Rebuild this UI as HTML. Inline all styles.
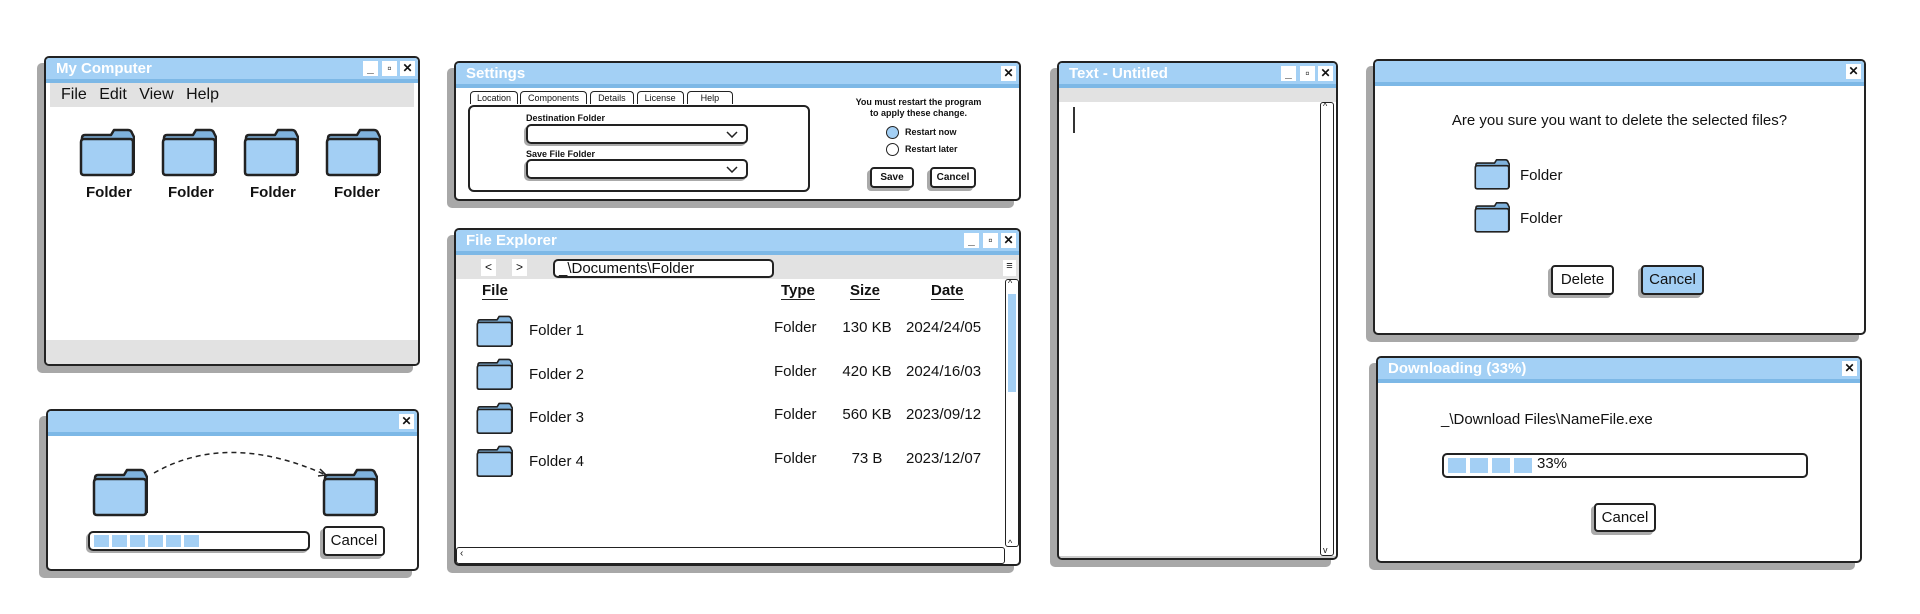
<!DOCTYPE html>
<html><head><meta charset="utf-8"><style>
*{box-sizing:border-box;margin:0;padding:0}
body{width:1920px;height:614px;background:#fff;position:relative;overflow:hidden;font-family:"Liberation Sans",sans-serif;color:#111}
.a{position:absolute}
.win{position:absolute;background:#fff;border:2px solid #222;border-radius:5px;box-shadow:-7px 7px 0 #a8a8a8;overflow:hidden}
.tb{position:absolute;left:0;right:0;top:0;height:25px;background:#a3d0f5;border-bottom:4px solid #7db8e6}
.tt{position:absolute;left:10px;top:2px;color:#fff;font-weight:bold;font-size:15px}
.wb{position:absolute;top:3px;width:15px;height:15px;background:#fff;font-size:12px;line-height:15px;text-align:center;font-weight:bold;color:#111}
.gray{position:absolute;left:0;right:0;background:#e2e2e2}
.btn{position:absolute;border:2px solid #222;border-radius:4px;background:#fff;box-shadow:-3px 3px 0 #aaa;font-size:15px;text-align:center}
.lbl{position:absolute;font-size:15px;font-weight:bold;white-space:nowrap}
.fx{position:absolute}
.chev{position:absolute;right:8px;top:5px}
</style></head><body>
<svg width="0" height="0" style="position:absolute"><defs>
<symbol id="f" viewBox="0 0 56 48"><path d="M3 44V10q0-3 3-3h26l3-5h14q3 0 4 3l2 4v35z" fill="#7fb2dd" stroke="#222" stroke-width="2.5" stroke-linejoin="round"/><path d="M2 14q0-3 3-3h46q3 0 3 3v30q0 3-3 3H5q-3 0-3-3z" fill="#a3cff4" stroke="#222" stroke-width="2.5"/></symbol>
</defs></svg>

<!-- My Computer -->
<div class="win" style="left:44px;top:56px;width:376px;height:310px">
<div class="tb"><span class="tt">My Computer</span>
<span class="wb" style="right:40px">_</span><span class="wb" style="right:21px">▫</span><span class="wb" style="right:3px">✕</span></div>
<div class="gray" style="top:25px;height:24px;left:4px;right:4px"></div>
<div class="a" style="left:15px;top:28px;font-size:16px;word-spacing:8px">File Edit View Help</div>
<div class="gray" style="top:282px;bottom:0"></div>
<svg class="fx" style="left:33px;top:69px" width="56" height="50"><use href="#f"/></svg>
<svg class="fx" style="left:115px;top:69px" width="56" height="50"><use href="#f"/></svg>
<svg class="fx" style="left:197px;top:69px" width="56" height="50"><use href="#f"/></svg>
<svg class="fx" style="left:279px;top:69px" width="56" height="50"><use href="#f"/></svg>
<div class="lbl" style="left:40px;top:126px">Folder</div><div class="lbl" style="left:122px;top:126px">Folder</div>
<div class="lbl" style="left:204px;top:126px">Folder</div><div class="lbl" style="left:288px;top:126px">Folder</div>
</div>

<!-- Copy dialog -->
<div class="win" style="left:46px;top:409px;width:373px;height:162px">
<div class="tb"><span class="wb" style="right:3px">✕</span></div>
<svg class="fx" style="left:44px;top:56px" width="56" height="50"><use href="#f"/></svg>
<svg class="fx" style="left:274px;top:56px" width="56" height="50"><use href="#f"/></svg>
<svg class="fx" style="left:0;top:0" width="373" height="160"><path d="M106 62 Q180 20 278 64" fill="none" stroke="#222" stroke-width="1.5" stroke-dasharray="5 4"/><path d="M272 58l6 6-8 1" fill="none" stroke="#222" stroke-width="1.5"/></svg>
<div class="a" style="left:40px;top:120px;width:222px;height:20px;border:2px solid #222;border-radius:5px;box-shadow:-2px 2px 0 #aaa"></div>
<div class="a" style="left:46px;top:124px;width:105px;height:12px;background:repeating-linear-gradient(90deg,#a3cff4 0 15px,transparent 15px 18px)"></div>
<div class="btn" style="left:275px;top:115px;width:62px;height:30px;line-height:26px">Cancel</div>
</div>

<!-- Settings -->
<div class="win" style="left:454px;top:61px;width:567px;height:140px;font-size:10px;font-weight:bold">
<div class="tb"><span class="tt">Settings</span><span class="wb" style="right:3px">✕</span></div>
<div class="a" style="left:12px;top:42px;width:342px;height:87px;border:2px solid #222;border-radius:6px"></div>
<div class="a" style="left:14px;top:28px;font-size:9px;font-weight:normal">
<span style="display:inline-block;border:1.5px solid #222;border-bottom:none;border-radius:4px 4px 0 0;padding:1px 6px;background:#fff">Location</span><span style="display:inline-block;border:1.5px solid #222;border-bottom:none;border-radius:4px 4px 0 0;padding:1px 7px;margin-left:2px">Components</span><span style="display:inline-block;border:1.5px solid #222;border-bottom:none;border-radius:4px 4px 0 0;padding:1px 7px;margin-left:3px">Details</span><span style="display:inline-block;border:1.5px solid #222;border-bottom:none;border-radius:4px 4px 0 0;padding:1px 7px;margin-left:3px">License</span><span style="display:inline-block;border:1.5px solid #222;border-bottom:none;border-radius:4px 4px 0 0;padding:1px 13px;margin-left:3px">Help</span></div>
<div class="a" style="left:70px;top:50px;font-size:9px">Destination Folder</div>
<div class="a" style="left:70px;top:61px;width:222px;height:20px;border:2px solid #222;border-radius:5px;box-shadow:-2px 2px 0 #aaa"><svg class="chev" width="12" height="7"><path d="M1 1l5 5 5-5" fill="none" stroke="#222" stroke-width="1.5"/></svg></div>
<div class="a" style="left:70px;top:86px;font-size:9px">Save File Folder</div>
<div class="a" style="left:70px;top:96px;width:222px;height:20px;border:2px solid #222;border-radius:5px;box-shadow:-2px 2px 0 #aaa"><svg class="chev" width="12" height="7"><path d="M1 1l5 5 5-5" fill="none" stroke="#222" stroke-width="1.5"/></svg></div>
<div class="a" style="left:385px;top:34px;width:155px;text-align:center;font-size:9px;line-height:11px;white-space:nowrap">You must restart the program<br>to apply these change.</div>
<div class="a" style="left:430px;top:63px;width:13px;height:13px;border:1.5px solid #222;border-radius:50%;background:#a3cff4"></div>
<div class="a" style="left:449px;top:64px;font-size:9px">Restart now</div>
<div class="a" style="left:430px;top:80px;width:13px;height:13px;border:1.5px solid #222;border-radius:50%"></div>
<div class="a" style="left:449px;top:81px;font-size:9px">Restart later</div>
<div class="btn" style="left:414px;top:104px;width:44px;height:21px;font-size:10px;line-height:17px">Save</div>
<div class="btn" style="left:474px;top:104px;width:46px;height:21px;font-size:10px;line-height:17px">Cancel</div>
</div>

<!-- File Explorer -->
<div class="win" style="left:454px;top:228px;width:567px;height:338px">
<div class="tb"><span class="tt">File Explorer</span>
<span class="wb" style="right:40px">_</span><span class="wb" style="right:21px">▫</span><span class="wb" style="right:3px">✕</span></div>
<div class="gray" style="top:25px;height:24px"></div>
<div class="a" style="left:25px;top:29px;width:15px;height:17px;background:#fff;font-size:12px;line-height:17px;text-align:center">&lt;</div>
<div class="a" style="left:56px;top:29px;width:15px;height:17px;background:#fff;font-size:12px;line-height:17px;text-align:center">&gt;</div>
<div class="a" style="left:97px;top:29px;width:221px;height:19px;border:2px solid #222;border-radius:5px;background:#fff;font-size:15px;line-height:15px;padding-left:4px">_\Documents\Folder</div>
<div class="a" style="right:3px;top:30px;width:13px;height:16px;background:#fff;font-size:11px;text-align:center">≡</div>
<div class="a" style="right:0;top:49px;width:14px;bottom:17px;border:1.5px solid #222;border-radius:3px;background:#fff"><div class="a" style="left:2px;right:2px;top:14px;height:98px;background:#a3cff4"></div><span class="a" style="left:2px;top:-2px;font-size:9px">^</span><span class="a" style="left:2px;bottom:-2px;font-size:9px">^</span></div>
<div class="a" style="left:0;right:14px;bottom:0;height:17px;border:1.5px solid #222;border-radius:3px;background:#fff"><span class="a" style="left:3px;top:0;font-size:10px">‹</span></div>
<div class="a" style="left:26px;top:52px;font-size:15px;font-weight:bold;border-bottom:1.5px solid #222">File</div>
<div class="a" style="left:325px;top:52px;font-size:15px;font-weight:bold;border-bottom:1.5px solid #222">Type</div>
<div class="a" style="left:394px;top:52px;font-size:15px;font-weight:bold;border-bottom:1.5px solid #222">Size</div>
<div class="a" style="left:475px;top:52px;font-size:15px;font-weight:bold;border-bottom:1.5px solid #222">Date</div>
<svg class="fx" style="left:20px;top:85px" width="37" height="32"><use href="#f"/></svg>
<svg class="fx" style="left:20px;top:128px" width="37" height="32"><use href="#f"/></svg>
<svg class="fx" style="left:20px;top:172px" width="37" height="32"><use href="#f"/></svg>
<svg class="fx" style="left:20px;top:215px" width="37" height="32"><use href="#f"/></svg>
<div class="a" style="left:73px;top:79px;font-size:15px;line-height:43.5px">Folder 1<br>Folder 2<br>Folder 3<br>Folder 4</div>
<div class="a" style="left:318px;top:76px;font-size:15px;line-height:43.5px">Folder<br>Folder<br>Folder<br>Folder</div>
<div class="a" style="left:378px;top:76px;width:66px;text-align:center;font-size:15px;line-height:43.5px">130 KB<br>420 KB<br>560 KB<br>73 B</div>
<div class="a" style="left:450px;top:76px;font-size:15px;line-height:43.5px">2024/24/05<br>2024/16/03<br>2023/09/12<br>2023/12/07</div>
</div>

<!-- Text -->
<div class="win" style="left:1057px;top:61px;width:281px;height:499px">
<div class="tb"><span class="tt">Text - Untitled</span>
<span class="wb" style="right:40px">_</span><span class="wb" style="right:21px">▫</span><span class="wb" style="right:3px">✕</span></div>
<div class="gray" style="top:25px;height:14px"></div>
<div class="a" style="left:14px;top:44px;width:1.5px;height:26px;background:#333"></div>
<div class="a" style="right:2px;top:39px;width:14px;bottom:2px;border:1.5px solid #222;border-radius:3px"><span class="a" style="left:2px;top:-2px;font-size:9px">^</span><span class="a" style="left:2px;bottom:0;font-size:9px">v</span></div>
<div class="a" style="left:0;right:0;bottom:0;height:2px;background:#ccc"></div>
</div>

<!-- Delete -->
<div class="win" style="left:1373px;top:59px;width:493px;height:276px">
<div class="tb"><span class="wb" style="right:3px">✕</span></div>
<div class="a" style="left:0;right:0;top:51px;text-align:center;font-size:15px">Are you sure you want to delete the selected files?</div>
<svg class="fx" style="left:99px;top:97px" width="36" height="32"><use href="#f"/></svg>
<svg class="fx" style="left:99px;top:140px" width="36" height="32"><use href="#f"/></svg>
<div class="a" style="left:145px;top:106px;font-size:15px">Folder</div>
<div class="a" style="left:145px;top:149px;font-size:15px">Folder</div>
<div class="btn" style="left:176px;top:204px;width:63px;height:30px;line-height:26px">Delete</div>
<div class="btn" style="left:266px;top:204px;width:63px;height:30px;line-height:26px;background:#a3cff4">Cancel</div>
</div>

<!-- Downloading -->
<div class="win" style="left:1376px;top:356px;width:486px;height:207px">
<div class="tb"><span class="tt">Downloading (33%)</span><span class="wb" style="right:3px">✕</span></div>
<div class="a" style="left:63px;top:53px;font-size:15px">_\Download Files\NameFile.exe</div>
<div class="a" style="left:64px;top:95px;width:366px;height:25px;border:2px solid #222;border-radius:5px"></div>
<div class="a" style="left:70px;top:100px;width:84px;height:15px;background:repeating-linear-gradient(90deg,#a3cff4 0 18px,transparent 18px 22px)"></div>
<div class="a" style="left:159px;top:97px;font-size:15px">33%</div>
<div class="btn" style="left:216px;top:145px;width:62px;height:29px;line-height:25px">Cancel</div>
</div>
</body></html>
